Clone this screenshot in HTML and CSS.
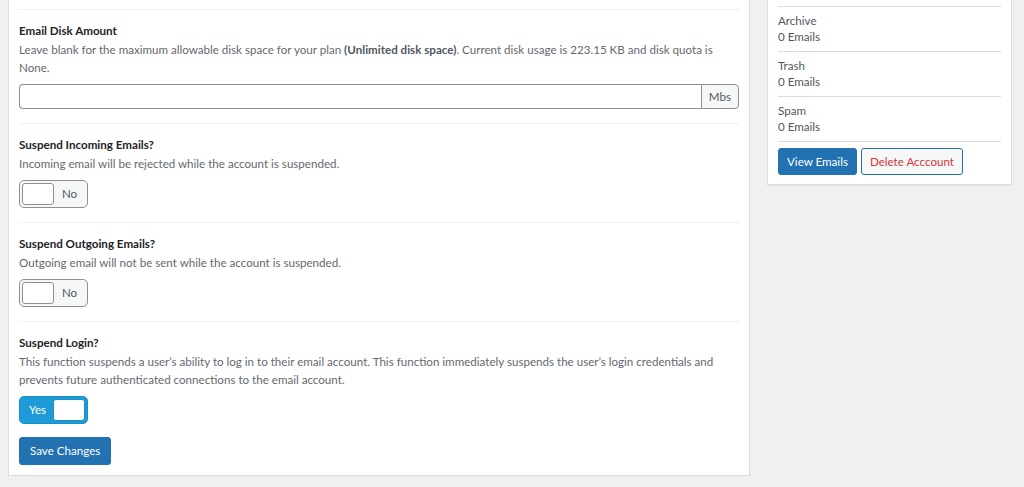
FILE: index.html
```html
<!DOCTYPE html>
<html>
<head>
  <meta charset="utf-8">
  <title>Edit Email Account</title>
  <link rel="stylesheet" href="styles.css">
</head>
<body>
  <div class="wrap">
    <div class="main-panel">
      <div class="field">
        <div class="field-title">Email Disk Amount</div>
        <div class="field-description">
          Leave blank for the maximum allowable disk space for your plan <b>(Unlimited disk space)</b>. Current disk usage is 223.15 KB and disk quota is None.
        </div>
        <div class="input-group">
          <input type="text" class="text-input">
          <span class="input-addon">Mbs</span>
        </div>
      </div>

      <div class="field">
        <div class="field-title">Suspend Incoming Emails?</div>
        <div class="field-description">Incoming email will be rejected while the account is suspended.</div>
        <div class="toggle">
          <span class="toggle-knob"></span>
          <span class="toggle-label">No</span>
        </div>
      </div>

      <div class="field">
        <div class="field-title">Suspend Outgoing Emails?</div>
        <div class="field-description">Outgoing email will not be sent while the account is suspended.</div>
        <div class="toggle">
          <span class="toggle-knob"></span>
          <span class="toggle-label">No</span>
        </div>
      </div>

      <div class="field field-last">
        <div class="field-title">Suspend Login?</div>
        <div class="field-description">
          This function suspends a user’s ability to log in to their email account. This function immediately suspends the user’s login credentials and prevents future authenticated connections to the email account.
        </div>
        <div class="toggle enabled">
          <span class="toggle-label">Yes</span>
          <span class="toggle-knob"></span>
        </div>
      </div>

      <button class="btn btn-primary save-btn">Save Changes</button>
    </div>

    <div class="side-panel">
      <div class="folder">
        <div>Archive</div>
        <div>0 Emails</div>
      </div>
      <div class="folder">
        <div>Trash</div>
        <div>0 Emails</div>
      </div>
      <div class="folder">
        <div>Spam</div>
        <div>0 Emails</div>
      </div>
      <div class="side-actions">
        <button class="btn btn-primary">View Emails</button>
        <button class="btn btn-danger">Delete Acccount</button>
      </div>
    </div>
  </div>
</body>
</html>
```

FILE: styles.css
```css
body {
  margin: 0;
  background: #f0f0f1;
  font-family: Lato, 'Open Sans', sans-serif;
  font-size: 11.6px;
  line-height: 18px;
  color: #3c434a;
}

.wrap {
  display: flex;
  align-items: flex-start;
  gap: 17px;
  padding-left: 8px;
}

.main-panel {
  width: 720px;
  background: white;
  border: 1px solid #dcdcde;
  border-top: none;
  box-shadow: 0 1px 1px rgba(0, 0, 0, 0.04);
  padding: 9px 10px 10px 10px;
}

.field {
  border-top: 1px solid #f0f0f1;
  padding: 12px 0 14px 0;
}

.field-last {
  padding-bottom: 13px;
}

.field-title {
  font-weight: 700;
  color: #1d2327;
  margin-bottom: 1px;
}

.field-description {
  color: #646970;
  margin-bottom: 7px;
}

.field-description b {
  color: #50575e;
}

.input-group {
  display: flex;
  height: 25px;
}

.text-input {
  flex: 1;
  margin: 0;
  border: 1px solid #8c8f94;
  border-right: none;
  border-radius: 4px 0 0 4px;
  background: white;
  padding: 0 8px;
  font-family: inherit;
}

.input-addon {
  display: flex;
  align-items: center;
  padding: 0 7px;
  border: 1px solid #8c8f94;
  border-radius: 0 4px 4px 0;
  background: #f6f7f7;
  color: #50575e;
}

.toggle {
  display: flex;
  align-items: center;
  width: 69px;
  height: 28px;
  box-sizing: border-box;
  padding: 2px;
  border: 1px solid #8c8f94;
  border-radius: 5px;
  background: #f6f7f7;
  cursor: pointer;
}

.toggle-knob {
  width: 32px;
  height: 22px;
  box-sizing: border-box;
  background: white;
  border: 1px solid #8c8f94;
  border-radius: 3px;
}

.toggle-label {
  flex: 1;
  text-align: center;
  color: #50575e;
}

.toggle.enabled {
  background: #1e9bd7;
  border-color: #1a8fc7;
}

.toggle.enabled .toggle-knob {
  border-color: #1a8fc7;
}

.toggle.enabled .toggle-label {
  color: white;
}

.btn {
  font-family: inherit;
  font-size: 11.6px;
  line-height: 18px;
  border-radius: 3px;
  padding: 4px 10px;
  cursor: pointer;
}

.btn-primary {
  background: #2271b1;
  border: 1px solid #2271b1;
  color: white;
}

.btn-danger {
  background: #f6f7f7;
  border: 1px solid #2271b1;
  color: #d63638;
}

.save-btn {
  display: block;
  height: 28px;
}

.side-panel {
  width: 223px;
  background: white;
  border: 1px solid #dcdcde;
  border-top: none;
  box-shadow: 0 1px 1px rgba(0, 0, 0, 0.04);
  padding: 6px 10px 9px 10px;
  color: #50575e;
}

.folder {
  border-top: 1px solid #dcdcde;
  padding: 6px 0;
  line-height: 16px;
}

.side-actions {
  display: flex;
  gap: 4px;
  border-top: 1px solid #dcdcde;
  padding-top: 6px;
}

.side-actions .btn {
  height: 27px;
  padding: 0 8px;
}
```
